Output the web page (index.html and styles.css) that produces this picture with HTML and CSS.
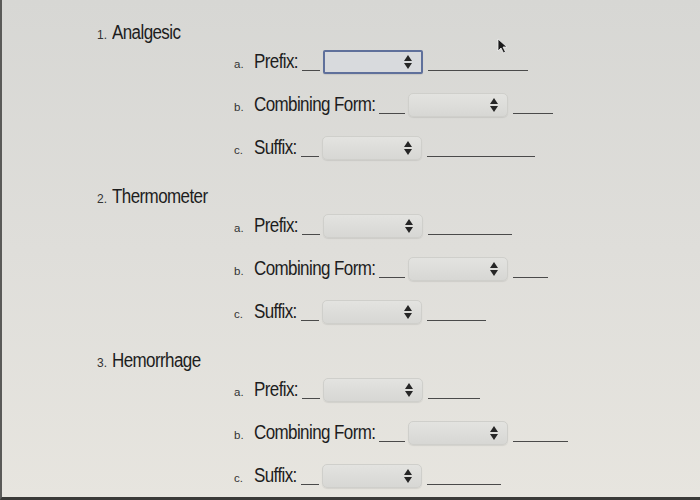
FILE: index.html
```html
<!DOCTYPE html>
<html>
<head>
<meta charset="utf-8">
<link rel="stylesheet" href="styles.css">
</head>
<body>
<div class="page">
  <section class="q">
    <div class="title"><span class="num">1.</span><span class="word">Analgesic</span></div>
    <div class="items">
      <div class="row"><span class="let">a.</span><span class="lbl">Prefix:</span><span class="ul lead"></span><span class="sel focus"><svg class="arr" viewBox="0 0 8 14"><path d="M4 0L8 6H0Z M4 14L8 8H0Z"/></svg></span><span class="ul" style="width:100px"></span></div>
      <div class="row"><span class="let">b.</span><span class="lbl">Combining Form:</span><span class="ul lead wide"></span><span class="sel"><svg class="arr" viewBox="0 0 8 14"><path d="M4 0L8 6H0Z M4 14L8 8H0Z"/></svg></span><span class="ul" style="width:40px"></span></div>
      <div class="row"><span class="let">c.</span><span class="lbl">Suffix:</span><span class="ul lead"></span><span class="sel"><svg class="arr" viewBox="0 0 8 14"><path d="M4 0L8 6H0Z M4 14L8 8H0Z"/></svg></span><span class="ul" style="width:108px"></span></div>
    </div>
  </section>
  <section class="q">
    <div class="title"><span class="num">2.</span><span class="word">Thermometer</span></div>
    <div class="items">
      <div class="row"><span class="let">a.</span><span class="lbl">Prefix:</span><span class="ul lead"></span><span class="sel"><svg class="arr" viewBox="0 0 8 14"><path d="M4 0L8 6H0Z M4 14L8 8H0Z"/></svg></span><span class="ul" style="width:84px"></span></div>
      <div class="row"><span class="let">b.</span><span class="lbl">Combining Form:</span><span class="ul lead wide"></span><span class="sel"><svg class="arr" viewBox="0 0 8 14"><path d="M4 0L8 6H0Z M4 14L8 8H0Z"/></svg></span><span class="ul" style="width:35px"></span></div>
      <div class="row"><span class="let">c.</span><span class="lbl">Suffix:</span><span class="ul lead"></span><span class="sel"><svg class="arr" viewBox="0 0 8 14"><path d="M4 0L8 6H0Z M4 14L8 8H0Z"/></svg></span><span class="ul" style="width:59px"></span></div>
    </div>
  </section>
  <section class="q">
    <div class="title"><span class="num">3.</span><span class="word">Hemorrhage</span></div>
    <div class="items">
      <div class="row"><span class="let">a.</span><span class="lbl">Prefix:</span><span class="ul lead"></span><span class="sel"><svg class="arr" viewBox="0 0 8 14"><path d="M4 0L8 6H0Z M4 14L8 8H0Z"/></svg></span><span class="ul" style="width:52px"></span></div>
      <div class="row"><span class="let">b.</span><span class="lbl">Combining Form:</span><span class="ul lead wide"></span><span class="sel"><svg class="arr" viewBox="0 0 8 14"><path d="M4 0L8 6H0Z M4 14L8 8H0Z"/></svg></span><span class="ul" style="width:55px"></span></div>
      <div class="row"><span class="let">c.</span><span class="lbl">Suffix:</span><span class="ul lead"></span><span class="sel"><svg class="arr" viewBox="0 0 8 14"><path d="M4 0L8 6H0Z M4 14L8 8H0Z"/></svg></span><span class="ul" style="width:74px"></span></div>
    </div>
  </section>
  <svg class="cursor" viewBox="0 0 12 16"><path d="M1 1L1 13L4 10L6.5 15L8.5 14L6 9L10 9Z" fill="#1a1a1a" stroke="#f4f4f4" stroke-width="0.8"/></svg>
</div>
</body>
</html>
```

FILE: styles.css
```css
html, body {
  margin: 0;
  padding: 0;
}
body {
  width: 700px;
  height: 500px;
  overflow: hidden;
  background: linear-gradient(180deg, #d7d7d4 0%, #dfdeda 50%, #e7e5df 100%);
  font-family: "Liberation Sans", Arial, sans-serif;
  color: #1d1d1d;
}
.page {
  position: relative;
  border-left: 2px solid #5a5a58;
  border-bottom: 3px solid #3a3a38;
  padding: 23px 0 0 95px;
  box-sizing: border-box;
  height: 500px;
}
.q {
  display: flex;
  flex-direction: column;
  margin-bottom: 27px;
}
.title {
  height: 20px;
  display: flex;
  align-items: center;
  gap: 5px;
}
.num {
  font-size: 12px;
  color: #333;
  margin-top: 3px;
}
.word {
  display: inline-block;
  font-size: 17px;
  letter-spacing: -0.6px;
  transform: scaleY(1.14);
}
.items {
  margin-top: 7px;
  margin-left: 137px;
  display: flex;
  flex-direction: column;
  gap: 19px;
}
.row {
  height: 24px;
  display: flex;
  align-items: center;
}
.let {
  font-size: 11.5px;
  color: #333;
  width: 20px;
  margin-top: 3px;
}
.lbl {
  display: inline-block;
  font-size: 17px;
  letter-spacing: -0.6px;
  transform: scaleY(1.14);
}
.ul {
  display: inline-block;
  height: 1.5px;
  background: #4a4a4a;
  align-self: flex-end;
  margin-bottom: 3px;
}
.ul.lead {
  width: 18px;
  margin-left: 4px;
  margin-right: 3px;
}
.ul.lead.wide {
  width: 26px;
  margin-left: 4px;
}
.sel {
  position: relative;
  width: 100px;
  height: 24px;
  box-sizing: border-box;
  border: 1px solid #cfcfcb;
  border-radius: 5px;
  background: linear-gradient(180deg, #e3e3e0 0%, #d7d7d4 100%);
  box-shadow: 0 1px 1px rgba(0,0,0,0.08);
  margin-right: 5px;
}
.sel.focus {
  border: 2px solid #5f709b;
  border-radius: 2px;
  background: #d8dadd;
}
.arr {
  position: absolute;
  right: 9px;
  top: 50%;
  width: 8px;
  height: 14px;
  margin-top: -7px;
  fill: #262626;
}
.cursor {
  position: absolute;
  left: 495px;
  top: 38px;
  width: 12px;
  height: 16px;
}
```
